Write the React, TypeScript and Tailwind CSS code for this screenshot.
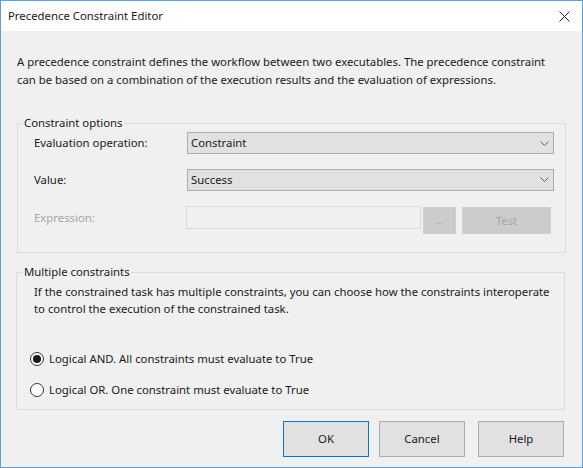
import { useState } from 'react';

function Chevron() {
  return (
    <svg width="9" height="5" viewBox="0 0 9 5" className="shrink-0">
      <path d="M0.5 0.5 L4.5 4.5 L8.5 0.5" fill="none" stroke="#606060" strokeWidth="1" />
    </svg>
  );
}

function Combo({ value }: { value: string }) {
  return (
    <div className="flex h-[22px] w-[367px] items-center justify-between border border-[#adadad] bg-[#e1e1e1] pl-[3px] pr-[4px] text-[#1a1a1a]">
      <span>{value}</span>
      <Chevron />
    </div>
  );
}

function Radio({ checked, label, onClick }: { checked: boolean; label: string; onClick: () => void }) {
  return (
    <button onClick={onClick} className="flex h-[17px] items-center gap-[5px] text-[#1a1a1a]">
      <span className="flex h-[14px] w-[14px] items-center justify-center rounded-full border border-[#333] bg-white">
        {checked && <span className="h-[8px] w-[8px] rounded-full bg-[#1a1a1a]" />}
      </span>
      <span>{label}</span>
    </button>
  );
}

function DialogButton({ label, primary }: { label: string; primary?: boolean }) {
  return (
    <button
      className={
        primary
          ? 'h-[36px] w-[86px] border border-[#0078d7] bg-[#e1e1e1] text-[#1a1a1a]'
          : 'h-[36px] w-[86px] border border-[#adadad] bg-[#e1e1e1] text-[#1a1a1a]'
      }
    >
      {label}
    </button>
  );
}

export default function App() {
  const [mode, setMode] = useState<'and' | 'or'>('and');

  return (
    <div className="flex h-[468px] w-[583px] flex-col border border-[#5ba3e0] bg-[#f0f0f0] font-['Noto_Sans',Arial,sans-serif] text-[11.35px]">
      {/* title bar */}
      <div className="flex h-[30px] shrink-0 items-center justify-between bg-white pl-[7px] pr-[12px]">
        <span className="text-[#1a1a1a]">Precedence Constraint Editor</span>
        <svg width="11" height="11" viewBox="0 0 11 11">
          <path d="M0.5 0.5 L10.5 10.5 M10.5 0.5 L0.5 10.5" stroke="#222" strokeWidth="1" />
        </svg>
      </div>

      <div className="flex flex-1 flex-col pl-[15px] pr-[17px]">
        <p className="pl-[1px] pt-[22px] leading-[18px] text-[#1a1a1a]">
          A precedence constraint defines the workflow between two executables. The precedence constraint
          can be based on a combination of the execution results and the evaluation of expressions.
        </p>

        {/* constraint options */}
        <fieldset className="mt-[26px] ml-[1px] border border-[#dcdcdc] pl-[16px] pr-[11px] pb-[18px]">
          <legend className="-ml-[11px] px-[1px] leading-[16px] text-[#1a1a1a]">Constraint options</legend>
          <div className="mt-[1px] flex h-[22px] items-center">
            <span className="w-[153px] text-[#1a1a1a]">Evaluation operation:</span>
            <Combo value="Constraint" />
          </div>
          <div className="mt-[14px] flex h-[23px] items-center">
            <span className="w-[153px] text-[#1a1a1a]">Value:</span>
            <Combo value="Success" />
          </div>
          <div className="mt-[15px] flex h-[28px] items-start">
            <span className="flex h-[24px] w-[152px] items-center text-[#a6a6a6]">Expression:</span>
            <div className="h-[23px] w-[235px] border border-[#d9d9d9] bg-[#f0f0f0]" />
            <button className="ml-[2px] mt-[1px] flex h-[27px] w-[33px] items-center justify-center border border-[#cfcfcf] bg-[#cccccc] text-[9px] text-[#a6a6a6]">
              ...
            </button>
            <button className="ml-[6px] mt-[1px] h-[27px] w-[89px] border border-[#cfcfcf] bg-[#cccccc] text-[#a6a6a6]">
              Test
            </button>
          </div>
        </fieldset>

        {/* multiple constraints */}
        <fieldset className="mt-[11px] border border-[#dcdcdc] pl-[17px] pr-[12px] pb-[11px]">
          <legend className="-ml-[11px] px-[1px] leading-[16px] text-[#1a1a1a]">Multiple constraints</legend>
          <p className="pt-[3px] leading-[17px] text-[#1a1a1a]">
            If the constrained task has multiple constraints, you can choose how the constraints interoperate
            to control the execution of the constrained task.
          </p>
          <div className="-ml-[4px] mt-[33px] flex flex-col gap-[14px]">
            <Radio checked={mode === 'and'} label="Logical AND. All constraints must evaluate to True" onClick={() => setMode('and')} />
            <Radio checked={mode === 'or'} label="Logical OR. One constraint must evaluate to True" onClick={() => setMode('or')} />
          </div>
        </fieldset>

        <div className="mt-[11px] flex justify-end pr-[1px]">
          <DialogButton label="OK" primary />
          <div className="ml-[10px] mr-[13px]">
            <DialogButton label="Cancel" />
          </div>
          <DialogButton label="Help" />
        </div>
      </div>
    </div>
  );
}
